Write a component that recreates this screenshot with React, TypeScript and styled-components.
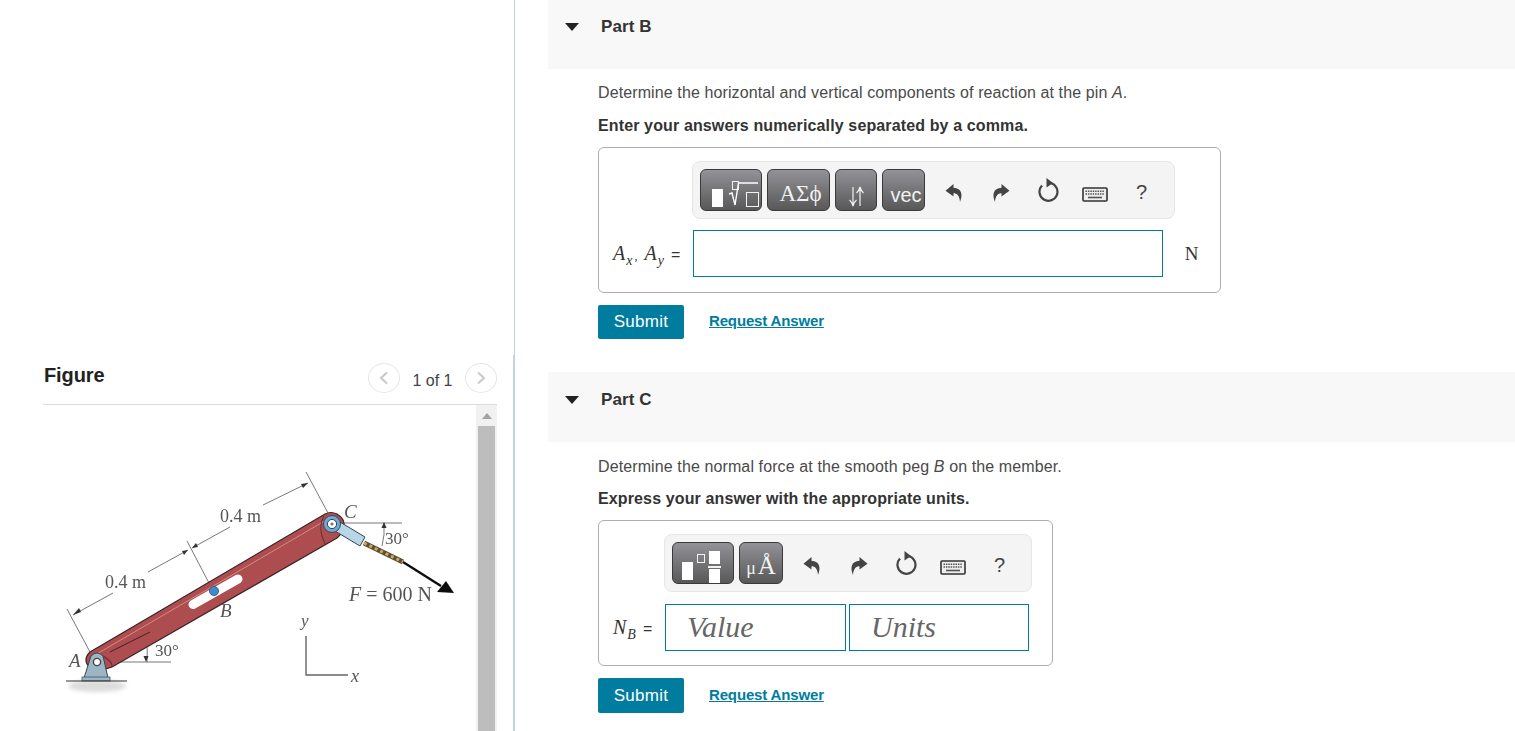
import React from 'react';
import styled, { createGlobalStyle } from 'styled-components';

const teal = '#007c9e';
const sans = '"Liberation Sans", Arial, sans-serif';
const serif = '"Liberation Serif", "Times New Roman", serif';

const GlobalStyle = createGlobalStyle`
    html, body {
        margin: 0;
        padding: 0;
        height: 100%;
        overflow: hidden;
        background: #fff;
        font-family: ${sans};
    }
    * {
        box-sizing: border-box;
    }
`;

const Page = styled.div`
    display: flex;
    width: 1515px;
    height: 731px;
    overflow: hidden;
`;

const LeftPane = styled.aside`
    width: 514px;
    flex: none;
    padding-top: 355px;
    display: flex;
`;

const FigurePanel = styled.div`
    flex: 1;
    display: flex;
    flex-direction: column;
    padding: 0 16px 0 43px;
    border-right: 1px solid #c3d3e3;
`;

const FigureHeader = styled.div`
    height: 50px;
    flex: none;
    display: flex;
    align-items: flex-start;
    justify-content: space-between;
    border-bottom: 1px solid #dcdcdc;
`;

const FigureTitle = styled.h2`
    margin: 8px 0 0 1px;
    font-size: 20px;
    line-height: 24px;
    font-weight: 700;
    letter-spacing: -0.1px;
    color: #222;
`;

const Pager = styled.div`
    display: flex;
    align-items: center;
    margin-top: 8px;
`;

const PagerButton = styled.span`
    width: 32px;
    height: 30px;
    border: 1px solid #e6e6e6;
    border-radius: 50%;
    display: flex;
    align-items: center;
    justify-content: center;
`;

const PagerText = styled.span`
    width: 65px;
    text-align: center;
    font-size: 16px;
    line-height: 18px;
    padding-top: 6px;
    color: #444;
`;

const FigureBody = styled.div`
    flex: 1;
    min-height: 0;
    display: flex;
    justify-content: space-between;
`;

const Scrollbar = styled.div`
    width: 21px;
    flex: none;
    background: #f1f1f1;
    display: flex;
    flex-direction: column;
    align-items: center;
`;

const ScrollArrow = styled.span`
    width: 0;
    height: 0;
    margin: 8px 0 7px;
    border-left: 5px solid transparent;
    border-right: 5px solid transparent;
    border-bottom: 6px solid #a3a3a3;
`;

const ScrollThumb = styled.div`
    width: 17px;
    flex: 1;
    background: #bdbdbd;
`;

const RightPane = styled.main`
    flex: 1;
    border-left: 1px solid #c3d3e3;
    padding-left: 33px;
`;

const Section = styled.section`
    margin-bottom: 33px;
`;

const PartHeader = styled.div<{ $height: number; $top: number }>`
    height: ${(p) => p.$height}px;
    background: #f8f8f8;
    display: flex;
    align-items: flex-start;
    padding: ${(p) => p.$top}px 0 0 17px;
`;

const Caret = styled.span`
    width: 0;
    height: 0;
    margin: 6px 22px 0 0;
    border-left: 7px solid transparent;
    border-right: 7px solid transparent;
    border-top: 8px solid #222;
`;

const PartTitle = styled.h3`
    margin: 0;
    font-size: 17px;
    line-height: 19px;
    font-weight: 700;
    letter-spacing: 0.1px;
    color: #333;
`;

const PartBody = styled.div`
    padding-left: 50px;
`;

const Prompt = styled.p<{ $top: number }>`
    margin: ${(p) => p.$top}px 0 0;
    font-size: 16px;
    line-height: 20px;
    letter-spacing: 0.11px;
    color: #4a4a4a;
`;

const Instruction = styled.p<{ $top: number }>`
    margin: ${(p) => p.$top}px 0 0;
    font-size: 16px;
    line-height: 20px;
    font-weight: 700;
    letter-spacing: 0.13px;
    color: #333;
`;

const AnswerBox = styled.div<{ $width: number; $toolbarLeft: number; $bottom: number }>`
    width: ${(p) => p.$width}px;
    margin-top: 11px;
    padding: 13px 0 ${(p) => p.$bottom}px ${(p) => p.$toolbarLeft}px;
    border: 1px solid #adadad;
    border-radius: 6px;
`;

const Toolbar = styled.div<{ $width: number }>`
    width: ${(p) => p.$width}px;
    height: 58px;
    display: flex;
    align-items: center;
    padding-left: 7px;
    background: #f4f4f4;
    border: 1px solid #e6e6e6;
    border-radius: 8px;
`;

const TemplateButton = styled.span<{ $width: number }>`
    width: ${(p) => p.$width}px;
    height: 42px;
    flex: none;
    margin-right: 5px;
    display: flex;
    align-items: flex-end;
    justify-content: center;
    background: linear-gradient(#929298, #585858);
    border: 1px solid #3a3a3a;
    border-radius: 6px;
    color: #f2f2f2;
    overflow: hidden;
`;

const SymbolLabel = styled.span`
    font-family: ${serif};
    font-size: 23px;
    line-height: 26px;
    padding: 0 0 3px 4px;
    white-space: nowrap;
`;

const VecLabel = styled.span`
    font-family: ${sans};
    font-size: 20px;
    line-height: 24px;
    padding: 0 0 3px 5px;
`;

const UnitLabel = styled.span`
    font-family: ${serif};
    font-size: 25px;
    line-height: 30px;
    white-space: nowrap;

    small {
        font-size: 18px;
        margin-right: 2px;
    }
`;

const ToolSpacer = styled.span<{ $width: number }>`
    width: ${(p) => p.$width}px;
    flex: none;
`;

const ToolIcon = styled.span`
    width: 47px;
    flex: none;
    display: flex;
    align-items: center;
    justify-content: center;
    color: #444;
`;

const KeyboardSlot = styled(ToolIcon)`
    padding-top: 9px;
`;

const UndoSlot = styled(ToolIcon)`
    padding-top: 6px;
`;

const HelpSlot = styled(ToolIcon)`
    padding-top: 4px;
`;

const HelpMark = styled.span`
    font-size: 20px;
    line-height: 20px;
    color: #444;
`;

const AnswerRow = styled.div<{ $top: number; $leftShift: number }>`
    display: flex;
    align-items: center;
    margin: ${(p) => p.$top}px 0 0 -${(p) => p.$leftShift}px;
`;

const MathLabel = styled.span<{ $width: number }>`
    width: ${(p) => p.$width}px;
    flex: none;
    padding-left: 14px;
    font-family: ${serif};
    font-size: 20px;
    color: #333;
    white-space: nowrap;

    i {
        font-style: italic;
        letter-spacing: 1px;
    }

    sub {
        font-size: 14px;
        font-style: italic;
        line-height: 0;
    }

    em {
        font-family: ${sans};
        font-style: normal;
        font-size: 16px;
        margin-left: 7px;
    }
`;

const Separator = styled.span`
    font-size: 12px;
    margin: 0 7px 0 2px;
`;

const AnswerInput = styled.div<{ $width: number }>`
    width: ${(p) => p.$width}px;
    height: 47px;
    flex: none;
    border: 1px solid ${teal};
    padding-left: 21px;
    font-family: ${serif};
    font-style: italic;
    font-size: 30px;
    line-height: 44px;
    color: #666;
`;

const UnitMark = styled.span`
    width: 58px;
    text-align: center;
    font-family: ${serif};
    font-size: 19px;
    color: #333;
`;

const Actions = styled.div`
    display: flex;
    align-items: center;
    margin-top: 12px;
`;

const SubmitButton = styled.button<{ $height: number }>`
    width: 86px;
    height: ${(p) => p.$height}px;
    border: none;
    border-radius: 2px;
    background: ${teal};
    color: #fff;
    font-family: ${sans};
    font-size: 17px;
    letter-spacing: 0.25px;
    padding: 0;
`;

const RequestLink = styled.a`
    margin-left: 25px;
    padding-bottom: 3px;
    font-size: 15px;
    font-weight: 700;
    letter-spacing: -0.15px;
    color: ${teal};
    text-decoration: underline;
`;

const FigureText = styled.text<{ $italic?: boolean; $size?: number }>`
    font-family: ${serif};
    font-style: ${(p) => (p.$italic ? 'italic' : 'normal')};
    font-size: ${(p) => p.$size ?? 17}px;
    fill: #555;
`;

const Undo = ({ flip }: { flip?: boolean }) => (
    <svg width="18" height="20" viewBox="0 0 18 20" style={flip ? { transform: 'scaleX(-1)' } : undefined}>
        <path d="M8.5 1 L0.5 7.8 L8.5 13.5 V10.2 C12 10.2 14.6 12.5 15 19 C18 12 17 5.2 8.5 4.8 Z" fill="currentColor" />
    </svg>
);

const Reset = () => (
    <svg width="22" height="24" viewBox="0 0 22 24">
        <path d="M5 7.5 A9 9 0 1 0 13.5 5" fill="none" stroke="currentColor" strokeWidth="2.2" />
        <path d="M9.5 0 L9.5 9.5 L16 5 Z" fill="currentColor" />
    </svg>
);

const Keyboard = () => (
    <svg width="26" height="15" viewBox="0 0 26 15">
        <rect x="1" y="1" width="24" height="13" rx="1" fill="#eee" stroke="#333" strokeWidth="1.6" />
        <path d="M3.5 4.3 H22.5 M3.5 7 H22.5" stroke="#555" strokeWidth="1.4" strokeDasharray="1.5 0.9" />
        <path d="M6 10.5 H20" stroke="#555" strokeWidth="1.6" />
    </svg>
);

const RadicalGlyph = () => (
    <svg width="60" height="40" viewBox="0 0 60 40">
        <rect x="11" y="19" width="11" height="18" fill="#fff" />
        <rect x="31.5" y="11.5" width="6" height="8" fill="none" stroke="#f2f2f2" />
        <path d="M28 24 L31 23 L34 35 L37.5 13 H57" fill="none" stroke="#fff" strokeWidth="1.4" />
        <rect x="45.5" y="22.5" width="12" height="14" fill="none" stroke="#f2f2f2" />
    </svg>
);

const FractionGlyph = () => (
    <svg width="60" height="40" viewBox="0 0 60 40">
        <rect x="9" y="19" width="11" height="18" fill="#fff" />
        <rect x="24.5" y="11.5" width="7" height="8" fill="none" stroke="#f2f2f2" />
        <rect x="36" y="8" width="11" height="13" fill="#fff" />
        <rect x="35" y="23" width="13" height="2" fill="#f2f2f2" />
        <rect x="36" y="26" width="11" height="14" fill="#fff" />
    </svg>
);

const ArrowsGlyph = () => (
    <svg width="40" height="40" viewBox="0 0 40 40">
        <path d="M17 17 V35 M13.5 30 Q16 32 17 36 Q18 32 20.5 30" fill="none" stroke="#f2f2f2" strokeWidth="1.2" />
        <path d="M24 36 V18 M20.5 23 Q23 21 24 17 Q25 21 27.5 23" fill="none" stroke="#f2f2f2" strokeWidth="1.2" />
    </svg>
);

const Chevron = ({ right }: { right?: boolean }) => (
    <svg width="10" height="14" viewBox="0 0 10 14">
        <path d={right ? 'M2 1.5 L8 7 L2 12.5' : 'M8 1.5 L2 7 L8 12.5'} fill="none" stroke="#c9c9c9" strokeWidth="2" />
    </svg>
);

const MechanismFigure = () => (
    <svg width="433" height="326" viewBox="43 405 433 326">
        <defs>
            <filter id="soft" x="-5%" y="-5%" width="110%" height="110%">
                <feGaussianBlur stdDeviation="0.4" />
            </filter>
            <filter id="groundBlur" x="-20%" y="-50%" width="140%" height="200%">
                <feGaussianBlur stdDeviation="2" />
            </filter>
        </defs>
        <g filter="url(#soft)">
            <ellipse cx="97" cy="686" rx="29" ry="6" fill="#dcdcdc" filter="url(#groundBlur)" />
            <g fill="none" stroke="#555" strokeWidth="0.8">
                <path d="M67 609 L90 652 M187 541 L209 583 M306 472 L328 513" />
                <path d="M73 615 L113 593 M148 572 L188 550 M192 548 L230 527 M263 505 L308 483" />
                <path d="M115 662 H171 M343 523 H402" />
                <path d="M146 638 Q148 650 147 662 M384 523 Q385 535 382 546" />
            </g>
            <path d="M73 615 L79 608 L81 612 Z M308 483 L301 484 L303 488 Z M188 550 L182 551 L184 555 Z M192 548 L198 547 L196 543 Z" fill="#333" />
            <path d="M146 636 L143.5 642 L148.5 642 Z M146 662 L143.5 656 L148.5 656 Z M384 522 L381.5 528 L386.5 528 Z" fill="#333" />
            <path d="M90 652 L325 514 Q331 511 337 514 Q345 519 344 526 Q343 533 337 538 L112 667 Q100 672 90 668 Q82 660 90 652 Z" fill="#ad4d50" stroke="#3a2325" strokeWidth="1.2" />
            <path d="M95 655 L328 519" stroke="#d58a84" strokeWidth="1" fill="none" />
            <path d="M110 652 L150 632" stroke="#3a2325" strokeWidth="1" fill="none" />
            <path d="M103 656 Q113 662 112 667" stroke="#6c2c30" strokeWidth="1.2" fill="none" />
            <path d="M324 516 Q317 527 325 544" stroke="#6c2c30" strokeWidth="1" fill="none" />
            <path d="M193 604.5 L238 579" stroke="#fff" strokeWidth="9" strokeLinecap="round" fill="none" />
            <circle cx="214" cy="591" r="4.6" fill="#3d8bc7" stroke="#29567a" strokeWidth="0.8" />
            <path d="M91 656 Q97 650 103 656 L108 678 H84 Z" fill="#9db6c6" stroke="#3c464d" strokeWidth="1" />
            <circle cx="97" cy="662" r="3.6" fill="#fff" stroke="#444" strokeWidth="1.4" />
            <rect x="82" y="677" width="28" height="4" fill="#9db6c6" stroke="#444" strokeWidth="0.7" />
            <path d="M66 681 H127" stroke="#333" strokeWidth="1.2" />
            <path d="M340 522 L365 537 L360 546 L335 531 Z" fill="#b7d6e8" stroke="#34444f" strokeWidth="1" />
            <circle cx="332" cy="524" r="8.5" fill="#6fa8d6" stroke="#33495a" strokeWidth="1" />
            <circle cx="332" cy="524" r="4.6" fill="#fff" stroke="#34444f" strokeWidth="1" />
            <circle cx="332" cy="524" r="1.6" fill="#777" />
            <path d="M364 543 L403 562" stroke="#5d4f30" strokeWidth="5" fill="none" />
            <path d="M364 543 L403 562" stroke="#c9a869" strokeWidth="3" strokeDasharray="3 3" fill="none" />
            <path d="M403 562 L441 586" stroke="#111" strokeWidth="2.4" fill="none" />
            <path d="M454 593 L437 592 L446 581 Z" fill="#111" />
            <path d="M306 636 V675 H348" stroke="#666" strokeWidth="1.4" fill="none" />
            <FigureText x="105" y="588" $size={18}>0.4 m</FigureText>
            <FigureText x="220" y="522" $size={18}>0.4 m</FigureText>
            <FigureText x="220" y="617" $italic $size={19}>B</FigureText>
            <FigureText x="69" y="667" $italic $size={19}>A</FigureText>
            <FigureText x="344" y="518" $italic $size={19}>C</FigureText>
            <FigureText x="155" y="656">30°</FigureText>
            <FigureText x="385" y="544">30°</FigureText>
            <FigureText x="349" y="601" $size={20}>
                <tspan fontStyle="italic">F</tspan> = 600 N
            </FigureText>
            <FigureText x="301" y="626" $italic>y</FigureText>
            <FigureText x="351" y="682" $italic $size={18}>x</FigureText>
        </g>
    </svg>
);

const HistoryTools = () => (
    <>
        <UndoSlot><Undo /></UndoSlot>
        <UndoSlot><Undo flip /></UndoSlot>
        <ToolIcon><Reset /></ToolIcon>
        <KeyboardSlot><Keyboard /></KeyboardSlot>
        <HelpSlot><HelpMark>?</HelpMark></HelpSlot>
    </>
);

const Submission = ({ height }: { height: number }) => (
    <Actions>
        <SubmitButton $height={height}>Submit</SubmitButton>
        <RequestLink>Request Answer</RequestLink>
    </Actions>
);

export default function App() {
    return (
        <Page>
            <GlobalStyle />
            <LeftPane>
                <FigurePanel>
                    <FigureHeader>
                        <FigureTitle>Figure</FigureTitle>
                        <Pager>
                            <PagerButton><Chevron /></PagerButton>
                            <PagerText>1 of 1</PagerText>
                            <PagerButton><Chevron right /></PagerButton>
                        </Pager>
                    </FigureHeader>
                    <FigureBody>
                        <MechanismFigure />
                        <Scrollbar>
                            <ScrollArrow />
                            <ScrollThumb />
                        </Scrollbar>
                    </FigureBody>
                </FigurePanel>
            </LeftPane>
            <RightPane>
                <Section>
                    <PartHeader $height={69} $top={17}>
                        <Caret />
                        <PartTitle>Part B</PartTitle>
                    </PartHeader>
                    <PartBody>
                        <Prompt $top={14}>Determine the horizontal and vertical components of reaction at the pin <i>A</i>.</Prompt>
                        <Instruction $top={13}>Enter your answers numerically separated by a comma.</Instruction>
                        <AnswerBox $width={623} $toolbarLeft={93} $bottom={15}>
                            <Toolbar $width={483}>
                                <TemplateButton $width={62}><RadicalGlyph /></TemplateButton>
                                <TemplateButton $width={63}><SymbolLabel>ΑΣϕ</SymbolLabel></TemplateButton>
                                <TemplateButton $width={42}><ArrowsGlyph /></TemplateButton>
                                <TemplateButton $width={43}><VecLabel>vec</VecLabel></TemplateButton>
                                <HistoryTools />
                            </Toolbar>
                            <AnswerRow $top={11} $leftShift={93}>
                                <MathLabel $width={94}>
                                    <i>A</i><sub>x</sub><Separator>,</Separator><i>A</i><sub>y</sub><em>=</em>
                                </MathLabel>
                                <AnswerInput $width={470} />
                                <UnitMark>N</UnitMark>
                            </AnswerRow>
                        </AnswerBox>
                        <Submission height={34} />
                    </PartBody>
                </Section>
                <Section>
                    <PartHeader $height={70} $top={18}>
                        <Caret />
                        <PartTitle>Part C</PartTitle>
                    </PartHeader>
                    <PartBody>
                        <Prompt $top={15}>Determine the normal force at the smooth peg <i>B</i> on the member.</Prompt>
                        <Instruction $top={12}>Express your answer with the appropriate units.</Instruction>
                        <AnswerBox $width={455} $toolbarLeft={65} $bottom={14}>
                            <Toolbar $width={368}>
                                <TemplateButton $width={62}><FractionGlyph /></TemplateButton>
                                <TemplateButton $width={44}><UnitLabel><small>μ</small>Å</UnitLabel></TemplateButton>
                                <HistoryTools />
                            </Toolbar>
                            <AnswerRow $top={12} $leftShift={65}>
                                <MathLabel $width={66}>
                                    <i>N</i><sub>B</sub><em>=</em>
                                </MathLabel>
                                <AnswerInput $width={181}>Value</AnswerInput>
                                <ToolSpacer $width={3} />
                                <AnswerInput $width={180}>Units</AnswerInput>
                            </AnswerRow>
                        </AnswerBox>
                        <Submission height={35} />
                    </PartBody>
                </Section>
            </RightPane>
        </Page>
    );
}
